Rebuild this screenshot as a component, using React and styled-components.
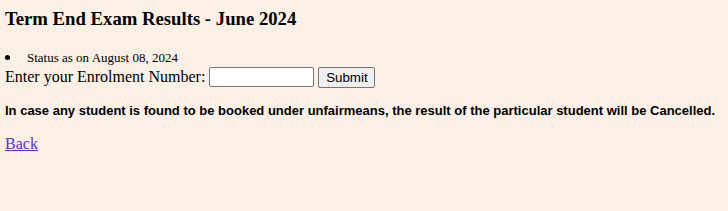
import React from 'react';
import styled, { createGlobalStyle } from 'styled-components';

const GlobalStyle = createGlobalStyle`
    html, body {
        margin: 0;
        background: #faf0e6;
    }
    body {
        font-family: "Liberation Serif", "Times New Roman", serif;
        color: #000;
    }
`;

const Page = styled.div`
    padding: 8px 5px 0;
`;

const Title = styled.h3`
    font-size: 18.72px;
    font-weight: bold;
    margin: 0 0 20px;
    line-height: 22px;
`;

const StatusList = styled.ul`
    list-style: none;
    margin: 0;
    padding: 0;
`;

const StatusItem = styled.li`
    display: flex;
    align-items: center;
    gap: 17px;
    font-size: 13px;
    line-height: 15px;

    &::before {
        content: '';
        width: 5px;
        height: 5px;
        border-radius: 50%;
        background: #000;
        flex: none;
    }
`;

const SearchForm = styled.form`
    display: flex;
    align-items: center;
    gap: 4px;
    font-size: 16px;
    height: 22px;
    margin-top: 1px;
`;

const EnrolInput = styled.input`
    width: 105px;
    height: 20px;
    box-sizing: border-box;
    border: 1px solid #767676;
    border-radius: 2px;
    background: #fff;
    padding: 1px 2px;
`;

const SubmitButton = styled.button`
    font-family: "Liberation Sans", Arial, sans-serif;
    font-size: 13.33px;
    height: 21px;
    width: 57px;
    padding: 1px 6px;
    border: 1px solid #767676;
    border-radius: 2px;
    background: #efefef;
    color: #000;
`;

const Notice = styled.p`
    font-family: "Liberation Sans", Arial, sans-serif;
    font-size: 13px;
    font-weight: bold;
    margin: 15px 0 0;
    line-height: 16px;
    white-space: nowrap;
`;

const BackLink = styled.a`
    display: inline-block;
    margin-top: 16px;
    font-size: 16px;
    color: #5b2ec8;
    text-decoration: underline;
`;

export default function App() {
    return (
        <>
            <GlobalStyle />
            <Page>
                <Title>Term End Exam Results - June 2024</Title>
                <StatusList>
                    <StatusItem>Status as on August 08, 2024</StatusItem>
                </StatusList>
                <SearchForm onSubmit={(e) => e.preventDefault()}>
                    Enter your Enrolment Number:
                    <EnrolInput type="text" />
                    <SubmitButton type="submit">Submit</SubmitButton>
                </SearchForm>
                <Notice>
                    In case any student is found to be booked under unfairmeans, the result of the particular student will be Cancelled.
                </Notice>
                <BackLink href="#">Back</BackLink>
            </Page>
        </>
    );
}
